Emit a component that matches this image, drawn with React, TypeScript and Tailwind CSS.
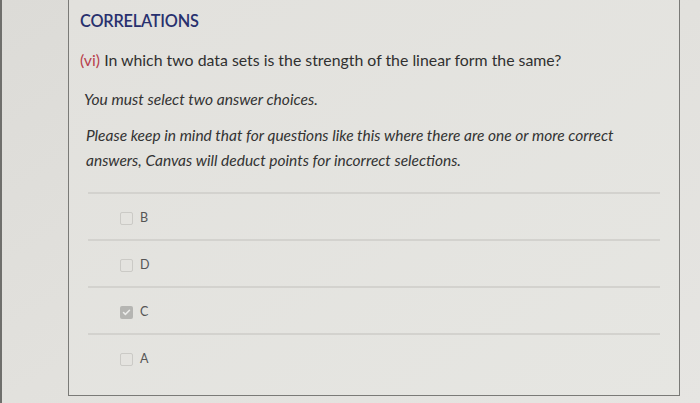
const options = [
	{ label: "B", checked: false },
	{ label: "D", checked: false },
	{ label: "C", checked: true },
	{ label: "A", checked: false },
];

function CheckBox({ checked }: { checked: boolean }) {
	if (checked) {
		return (
			<span className="flex h-[13px] w-[13px] items-center justify-center rounded-[2px] bg-[#b5b5b2]">
				<svg width="9" height="9" viewBox="0 0 24 24" fill="none" stroke="#ececea" strokeWidth="4" strokeLinecap="round" strokeLinejoin="round" aria-hidden="true">
					<polyline points="20 6 9 17 4 12" />
				</svg>
			</span>
		);
	}
	return <span className="h-[13px] w-[13px] rounded-[2px] border border-[#cbcac6] bg-[#e4e3df]" />;
}

export default function App() {
	return (
		<div className="flex h-[403px] w-[700px] overflow-hidden bg-gradient-to-br from-[#dcdbd7] via-[#e2e1dd] to-[#e6e5e2] font-['Lato','Liberation_Sans',sans-serif]">
			<div className="w-[2px] bg-[#6f6f6c]" />
			<div className="ml-[66px] flex h-[396px] w-[612px] flex-col border-x border-b border-[#7a7a77] bg-gradient-to-br from-[#e2e1dd] to-[#e6e6e2] pl-[11px] pt-[11px]">
				<h1 className="text-[16.3px] leading-[20px] font-semibold tracking-[-0.2px] text-[#28306e]">CORRELATIONS</h1>
				<p className="mt-[19px] text-[15.85px] leading-[20px] text-[#303030]">
					<span className="text-[#b8404c]">(vi)</span> In which two data sets is the strength of the linear form the same?
				</p>
				<p className="mt-[19px] pl-[4px] text-[15.6px] leading-[20px] italic text-[#333]">You must select two answer choices.</p>
				<p className="mt-[14px] pl-[6px] text-[15.5px] leading-[25px] italic text-[#333]">
					Please keep in mind that for questions like this where there are one or more correct
					<br />
					answers, Canvas will deduct points for incorrect selections.
				</p>
				<div className="mt-[19px] mr-[19px] ml-[8px] flex flex-col">
					{options.map((o) => (
						<div key={o.label} className="flex h-[47px] items-center gap-[7px] border-t-2 border-[#d3d2ce] pl-[32px] pt-[4px]">
							<CheckBox checked={o.checked} />
							<span className="text-[12.5px] text-[#555]">{o.label}</span>
						</div>
					))}
				</div>
			</div>
		</div>
	);
}
